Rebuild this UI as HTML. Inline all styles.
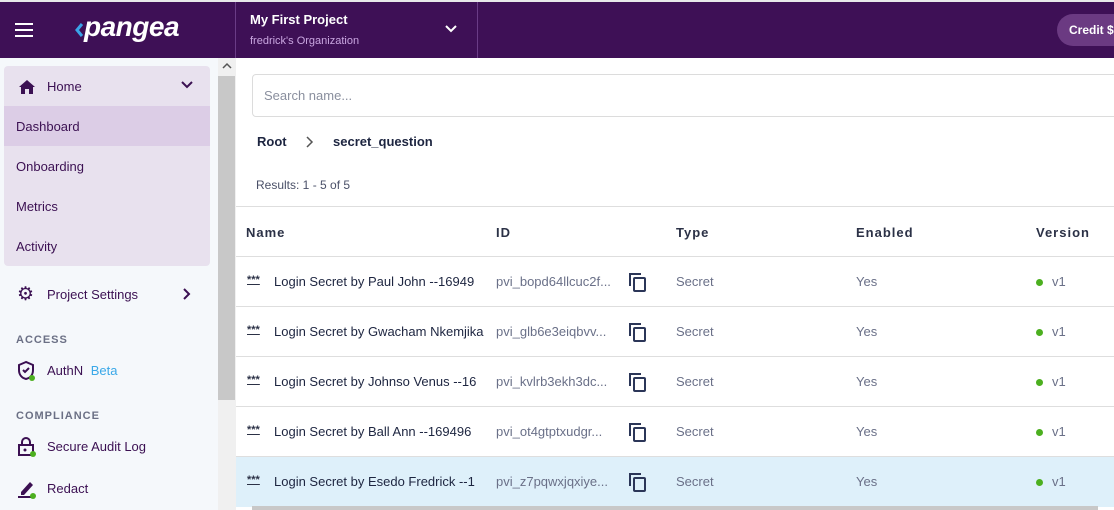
<!DOCTYPE html>
<html><head><style>
*{margin:0;padding:0;box-sizing:border-box}
body{width:1114px;height:510px;overflow:hidden;position:relative;font-family:"Liberation Sans",sans-serif;background:#fff;color:#1d2540}
.a{position:absolute;white-space:nowrap}
.hdr{left:0;top:0;width:1114px;height:58px;background:#3e1056;border-top:2px solid #e8e8ea}
.side{left:0;top:58px;width:218px;height:452px;background:#f5f8fb}
.nav{font-size:13px;color:#3b1052}
.sec{font-size:11px;letter-spacing:1px;color:#6b7085;font-weight:bold}
.th{font-size:13px;font-weight:bold;letter-spacing:1px;color:#2b3146}
.row{left:236px;width:878px;height:50px;border-bottom:1px solid #dedede}
.td{font-size:13px}
.nm{left:274px;width:213px;overflow:hidden;color:#1d2540}
.g{color:#6a7088}
.st{left:247px;font-size:11px;font-weight:bold;color:#2b3146;text-decoration:underline}
.dot{left:1036px;width:7px;height:7px;border-radius:50%;background:#4caf1f}
</style></head><body>
<div class="a hdr"></div>
<div class="a" style="left:15px;top:23px;width:18px;height:2px;background:#fff;box-shadow:0 6px 0 #fff,0 12px 0 #fff"></div>
<svg class="a" style="left:74px;top:22px" width="10" height="16"><path d="M8 2L3 8l5 6" stroke="#3aa4e8" stroke-width="3" fill="none"/></svg>
<div class="a" style="left:84px;top:11px;font-size:28px;font-weight:bold;font-style:italic;color:#fff;letter-spacing:-0.5px">pangea</div>
<div class="a" style="left:235px;top:2px;width:1px;height:56px;background:#6a3c86"></div>
<div class="a" style="left:477px;top:2px;width:1px;height:56px;background:#6a3c86"></div>
<div class="a" style="left:250px;top:12px;font-size:13px;font-weight:bold;color:#fff">My First Project</div>
<div class="a" style="left:250px;top:35px;font-size:11px;color:#c9a6e0">fredrick's Organization</div>
<svg class="a" style="left:444px;top:24px" width="14" height="10"><path d="M2 2l5 5 5-5" stroke="#fff" stroke-width="2" fill="none"/></svg>
<div class="a" style="left:1057px;top:14px;width:80px;height:32px;border-radius:16px;background:#6b3a82;color:#fff;font-size:12px;font-weight:bold;padding:9px 12px">Credit $</div>

<div class="a side"></div>
<div class="a" style="left:4px;top:66px;width:206px;height:200px;background:#e8e1ee;border-radius:4px"></div>
<div class="a" style="left:4px;top:106px;width:206px;height:40px;background:#dccde6"></div>
<svg class="a" style="left:18px;top:79px" width="18" height="16"><path d="M9 1L1 8h2v7h4v-5h4v5h4V8h2z" fill="#3b1052"/></svg>
<div class="a nav" style="left:47px;top:79px">Home</div>
<svg class="a" style="left:181px;top:81px" width="12" height="8"><path d="M1 1l5 5 5-5" stroke="#3b1052" stroke-width="2" fill="none"/></svg>
<div class="a nav" style="left:16px;top:119px">Dashboard</div>
<div class="a nav" style="left:16px;top:159px">Onboarding</div>
<div class="a nav" style="left:16px;top:199px">Metrics</div>
<div class="a nav" style="left:16px;top:239px">Activity</div>
<div class="a" style="left:17px;top:283px;font-size:19px;color:#3b1052">⚙</div>
<div class="a nav" style="left:47px;top:287px">Project Settings</div>
<svg class="a" style="left:183px;top:288px" width="8" height="12"><path d="M1 1l5 5-5 5" stroke="#3b1052" stroke-width="2" fill="none"/></svg>
<div class="a sec" style="left:16px;top:334px">ACCESS</div>
<svg class="a" style="left:17px;top:360px" width="20" height="22"><path d="M9 2L2 5v5c0 5 3 8 7 9 4-1 7-4 7-9V5z" stroke="#3b1052" stroke-width="2" fill="none"/><path d="M6 10l2 2 4-4" stroke="#3b1052" stroke-width="2" fill="none"/><circle cx="15" cy="18" r="3" fill="#4caf1f"/></svg>
<div class="a nav" style="left:47px;top:363px">AuthN <span style="color:#3aa8e8;margin-left:4px">Beta</span></div>
<div class="a sec" style="left:16px;top:410px">COMPLIANCE</div>
<svg class="a" style="left:17px;top:436px" width="20" height="22"><path d="M5 9V6a4 4 0 018 0v3" stroke="#3b1052" stroke-width="2" fill="none"/><rect x="2" y="9" width="14" height="10" stroke="#3b1052" stroke-width="2" fill="none"/><circle cx="8" cy="14" r="1.5" fill="#3b1052"/><circle cx="16" cy="18" r="3" fill="#4caf1f"/></svg>
<div class="a nav" style="left:47px;top:439px">Secure Audit Log</div>
<svg class="a" style="left:17px;top:478px" width="20" height="22"><path d="M4 14L13 4l3 3-9 10H4z" fill="#3b1052"/><rect x="1" y="18" width="13" height="2" fill="#3b1052"/><circle cx="16" cy="18" r="3" fill="#4caf1f"/></svg>
<div class="a nav" style="left:47px;top:481px">Redact</div>

<div class="a" style="left:218px;top:58px;width:18px;height:452px;background:#f0f0f0"></div>
<div class="a" style="left:218px;top:76px;width:17px;height:324px;background:#c8c8c8"></div>
<svg class="a" style="left:221px;top:62px" width="12" height="8"><path d="M2 6l4-4 4 4" stroke="#555" stroke-width="1.5" fill="none"/></svg>

<div class="a" style="left:252px;top:74px;width:880px;height:43px;border:1px solid #dcdcdc;border-radius:4px;font-size:13px;color:#8a8f9e;padding:13px 11px">Search name...</div>
<div class="a" style="left:257px;top:134px;font-size:13px;font-weight:bold;color:#1d2540">Root</div>
<svg class="a" style="left:306px;top:136px" width="8" height="12"><path d="M1 1l5 5-5 5" stroke="#555" stroke-width="1.5" fill="none"/></svg>
<div class="a" style="left:333px;top:134px;font-size:13px;font-weight:bold;color:#1d2540">secret_question</div>
<div class="a" style="left:256px;top:178px;font-size:12px;color:#4a5068">Results: 1 - 5 of 5</div>

<div class="a" style="left:236px;top:206px;width:878px;height:51px;border-top:1px solid #dedede;border-bottom:1px solid #dedede"></div>
<div class="a th" style="left:246px;top:225px">Name</div>
<div class="a th" style="left:496px;top:225px">ID</div>
<div class="a th" style="left:676px;top:225px">Type</div>
<div class="a th" style="left:856px;top:225px">Enabled</div>
<div class="a th" style="left:1036px;top:225px">Version</div>

<div class="a row" style="top:257px"></div>
<div class="a row" style="top:307px"></div>
<div class="a row" style="top:357px"></div>
<div class="a row" style="top:407px"></div>
<div class="a row" style="top:457px;background:#def0fa;border-bottom:none"></div>
<div class="a" style="left:252px;top:506px;width:846px;height:4px;background:#c8c8c8"></div>

<div class="a st" style="top:274px">***</div><div class="a td nm" style="top:274px">Login Secret by Paul John --16949</div><div class="a td g" style="left:496px;top:274px">pvi_bopd64llcuc2f...</div>
<div class="a st" style="top:324px">***</div><div class="a td nm" style="top:324px">Login Secret by Gwacham Nkemjika</div><div class="a td g" style="left:496px;top:324px">pvi_glb6e3eiqbvv...</div>
<div class="a st" style="top:374px">***</div><div class="a td nm" style="top:374px">Login Secret by Johnso Venus --16</div><div class="a td g" style="left:496px;top:374px">pvi_kvlrb3ekh3dc...</div>
<div class="a st" style="top:424px">***</div><div class="a td nm" style="top:424px">Login Secret by Ball Ann --169496</div><div class="a td g" style="left:496px;top:424px">pvi_ot4gtptxudgr...</div>
<div class="a st" style="top:474px">***</div><div class="a td nm" style="top:474px">Login Secret by Esedo Fredrick --1</div><div class="a td g" style="left:496px;top:474px">pvi_z7pqwxjqxiye...</div>

<svg class="a" style="left:629px;top:272px" width="18" height="20"><path d="M1 14V2h11" stroke="#2b3658" stroke-width="2" fill="none"/><rect x="5" y="6" width="11" height="13" rx="1" stroke="#2b3658" stroke-width="2" fill="none"/></svg>
<svg class="a" style="left:629px;top:322px" width="18" height="20"><path d="M1 14V2h11" stroke="#2b3658" stroke-width="2" fill="none"/><rect x="5" y="6" width="11" height="13" rx="1" stroke="#2b3658" stroke-width="2" fill="none"/></svg>
<svg class="a" style="left:629px;top:372px" width="18" height="20"><path d="M1 14V2h11" stroke="#2b3658" stroke-width="2" fill="none"/><rect x="5" y="6" width="11" height="13" rx="1" stroke="#2b3658" stroke-width="2" fill="none"/></svg>
<svg class="a" style="left:629px;top:422px" width="18" height="20"><path d="M1 14V2h11" stroke="#2b3658" stroke-width="2" fill="none"/><rect x="5" y="6" width="11" height="13" rx="1" stroke="#2b3658" stroke-width="2" fill="none"/></svg>
<svg class="a" style="left:629px;top:472px" width="18" height="20"><path d="M1 14V2h11" stroke="#2b3658" stroke-width="2" fill="none"/><rect x="5" y="6" width="11" height="13" rx="1" stroke="#2b3658" stroke-width="2" fill="none"/></svg>

<div class="a td g" style="left:676px;top:274px">Secret</div><div class="a td g" style="left:856px;top:274px">Yes</div><div class="a dot" style="top:279px"></div><div class="a td g" style="left:1052px;top:274px">v1</div>
<div class="a td g" style="left:676px;top:324px">Secret</div><div class="a td g" style="left:856px;top:324px">Yes</div><div class="a dot" style="top:329px"></div><div class="a td g" style="left:1052px;top:324px">v1</div>
<div class="a td g" style="left:676px;top:374px">Secret</div><div class="a td g" style="left:856px;top:374px">Yes</div><div class="a dot" style="top:379px"></div><div class="a td g" style="left:1052px;top:374px">v1</div>
<div class="a td g" style="left:676px;top:424px">Secret</div><div class="a td g" style="left:856px;top:424px">Yes</div><div class="a dot" style="top:429px"></div><div class="a td g" style="left:1052px;top:424px">v1</div>
<div class="a td g" style="left:676px;top:474px">Secret</div><div class="a td g" style="left:856px;top:474px">Yes</div><div class="a dot" style="top:479px"></div><div class="a td g" style="left:1052px;top:474px">v1</div>
</body></html>
